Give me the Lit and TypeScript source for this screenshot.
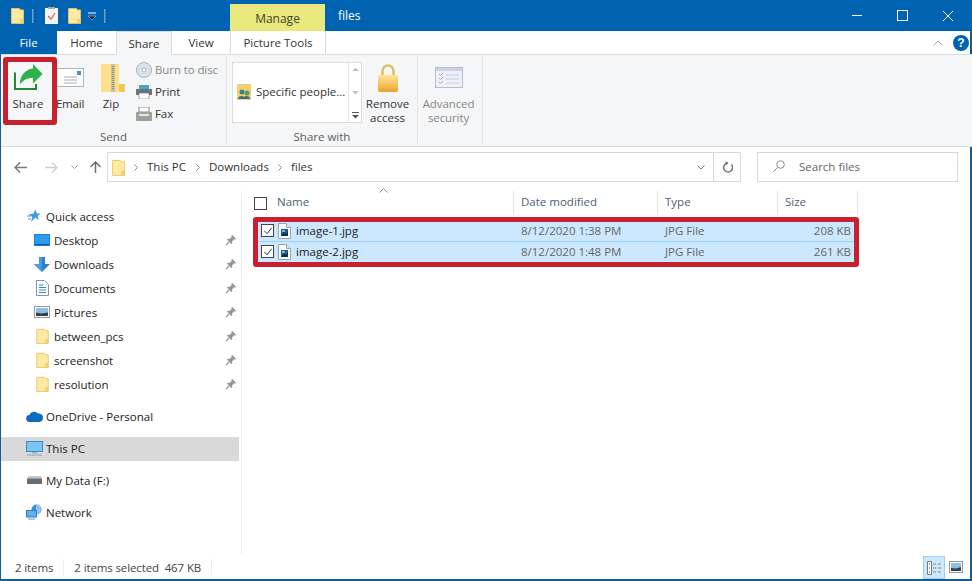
import { LitElement, html, css } from "lit";
import { customElement } from "lit/decorators.js";

const folder = (w = 14, h = 18) => html`<svg width=${w} height=${h} viewBox="0 0 14 18"><path d="M.5 1.500h8.500l1 1.500h3.500v14.500H.5z" fill="#ffe9a3" stroke="#e6c864"/><path d="M10 12.500h3.500v5H10z" fill="#f3cf6c"/></svg>`;
const pin = html`<svg width="12" height="12" viewBox="0 0 12 12"><path d="M7 .8l4.200 4.200-1.200.6-.8-.4L7 7.400l.3 1.800-.9.9L1.900 5.600l.9-.9 1.800.3 2.200-2.200-.4-.8z" fill="#8f949b"/><path d="M4 8L1 11" stroke="#8f949b" stroke-width="1.200"/></svg>`;
const fileIcon = html`<svg class="fi" width="13" height="16" viewBox="0 0 13 16"><path d="M.5.5h8l4 4v11H.5z" fill="#fff" stroke="#9aa3ad"/><path d="M8.500.5v4h4" fill="#e8edf2" stroke="#9aa3ad"/><rect x="3" y="6" width="7" height="7" fill="#1d5e8e"/><path d="M3 13l3-4 2 2 2-3v5z" fill="#0e3350"/><rect x="4" y="7" width="3" height="2" fill="#6fc0e8"/></svg>`;
const check = (on: boolean) => html`<span class="check">${on ? html`<svg width="10" height="10" viewBox="0 0 11 11"><path d="M1.500 5.500l3 3 5-6.500" fill="none" stroke="#333" stroke-width="1.100"/></svg>` : ""}</span>`;
const sepChev = html`<svg width="4" height="7"><path d="M.5.500l3 3-3 3" fill="none" stroke="#8a8a8a"/></svg>`;

const navIcons: Record<string, unknown> = {
  star: html`<svg width="14" height="14" viewBox="0 0 14 14"><path d="M8.500.5l1.300 4h4l-3.200 2.500 1.200 4-3.400-2.400L4 13l1.400-5L1.600 5.300l4.600-.5z" fill="#3a9bdc"/><path d="M0 7h4M1 10h3" stroke="#3a9bdc"/></svg>`,
  desktop: html`<svg width="16" height="12" viewBox="0 0 16 12"><rect width="16" height="12" fill="#1c7ed6"/><rect x="1" y="1" width="14" height="9" fill="#2f9bf0"/><rect x="1" y="10" width="14" height="1" fill="#0f5aa0"/></svg>`,
  down: html`<svg width="16" height="15" viewBox="0 0 16 15"><path d="M5 0h6v7h5l-8 8-8-8h5z" fill="#2f7fd0"/><path d="M5 0h3v15l-8-8h5z" fill="#4a9be6"/></svg>`,
  doc: html`<svg width="13" height="16" viewBox="0 0 13 16"><path d="M.5.5h8l4 4v11H.5z" fill="#fff" stroke="#8a96a3"/><path d="M3 5h4M3 7.500h7M3 10h7M3 12.500h7" stroke="#2d8fc4"/></svg>`,
  pic: html`<svg width="16" height="12" viewBox="0 0 16 12"><rect x=".5" y=".5" width="15" height="11" fill="#fff" stroke="#8f98a3"/><rect x="2" y="2" width="12" height="8" fill="#8fc0e0"/><path d="M2 10V6.500l5 1 7-1V10z" fill="#30404f"/></svg>`,
  cloud: html`<svg width="17" height="11" viewBox="0 0 17 11"><path d="M4 11a3.500 3.500 0 0 1-.6-7A5 5 0 0 1 12 2.500a4 4 0 0 1 1.500 8.500z" fill="#0f6cbd"/></svg>`,
  pc: html`<svg width="17" height="15" viewBox="0 0 17 15"><rect x=".5" y=".5" width="16" height="10" fill="#7cc4f2" stroke="#3a8fc8"/><path d="M6 11h5v1.500H6z" fill="#9bb0c0"/><path d="M1 14h15" stroke="#8fa0ad"/></svg>`,
  drive: html`<svg width="15" height="8" viewBox="0 0 15 8"><path d="M2 0h11l2 3v5H0V3z" fill="#6a6e72"/><path d="M2 0h11l1.500 2.500H.5z" fill="#c5c8cb"/></svg>`,
  net: html`<svg width="16" height="16" viewBox="0 0 16 16"><circle cx="10.500" cy="5.500" r="5" fill="#3f8fd2"/><path d="M10 .5a5 5 0 0 1 0 10z" fill="#8fc6ee"/><rect x=".5" y="6.500" width="10" height="6.500" fill="#5fb0ea" stroke="#2f7fc0"/><path d="M2 15h7" stroke="#7a93a8"/></svg>`,
};

const nav = [
  { k: "star", t: "Quick access", lv: 0 },
  { k: "desktop", t: "Desktop", lv: 1, p: 1 },
  { k: "down", t: "Downloads", lv: 1, p: 1 },
  { k: "doc", t: "Documents", lv: 1, p: 1 },
  { k: "pic", t: "Pictures", lv: 1, p: 1 },
  { k: "folder", t: "between_pcs", lv: 1, p: 1 },
  { k: "folder", t: "screenshot", lv: 1, p: 1 },
  { k: "folder", t: "resolution", lv: 1, p: 1 },
  { k: "cloud", t: "OneDrive - Personal", lv: 0, gap: 1 },
  { k: "pc", t: "This PC", lv: 0, gap: 1, sel: 1 },
  { k: "drive", t: "My Data (F:)", lv: 0, gap: 1 },
  { k: "net", t: "Network", lv: 0, gap: 1 },
];

const rows = [
  ["image-1.jpg", "8/12/2020 1:38 PM", "JPG File", "208 KB"],
  ["image-2.jpg", "8/12/2020 1:48 PM", "JPG File", "261 KB"],
];

@customElement("app-root")
export class AppRoot extends LitElement {
  static styles = css`
    :host { display: block; width: 972px; height: 581px; overflow: hidden; position: relative; background: #fff; font-family: "Open Sans", "Noto Sans", sans-serif; font-size: 11.5px; color: #222; }
    .win { height: 581px; box-sizing: border-box; border: 1px solid #0a5f9e; border-top: 0; border-bottom-width: 2px; border-right-width: 2px; display: flex; flex-direction: column; }
    .title { height: 31px; margin: 0 -2px 0 -1px; background: #0063b1; display: flex; align-items: flex-end; flex: none; color: #fff; }
    .qat { width: 230px; height: 31px; box-sizing: border-box; padding: 7px 0 0 11px; display: flex; align-items: flex-start; }
    .qat .sep { width: 1px; height: 14px; background: #6ea3cf; margin: 2px 11px 0 8px; border-right: 1px solid #2f80bf; }
    .qat svg { flex: none; }
    .qat .gap { width: 10px; }
    .qat .gap2 { width: 7px; }
    .qat .sep2 { margin-left: 8px; }
    .manage { width: 95px; height: 27px; background: #e8e87c; color: #41452a; display: flex; align-items: center; justify-content: center; font-size: 12px; padding-top: 2px; box-sizing: border-box; }
    .tname { margin-left: 13px; align-self: center; font-size: 12px; padding-bottom: 1px; }
    .caps { margin-left: auto; margin-right: 1px; height: 31px; display: flex; }
    .cap { width: 46px; display: flex; align-items: center; justify-content: center; }
    .cap.min { width: 44px; }
    .tabs { height: 23px; flex: none; display: flex; background: #fff; margin-left: -1px; position: relative; }
    .tab { display: flex; align-items: center; justify-content: center; box-sizing: border-box; height: 23px; color: #333; font-size: 11.5px; }
    .tab.file { width: 57px; background: #0063b1; color: #fff; }
    .tab.home { width: 59px; }
    .tab.share { width: 56px; height: 24px; background: #f5f6f7; border: 1px solid #dadbdc; border-bottom: 0; z-index: 1; }
    .tab.view { width: 58px; }
    .tab.pt { width: 96px; border-left: 1px solid #dadbdc; border-right: 1px solid #dadbdc; }
    .tabr { margin-left: auto; display: flex; align-items: center; gap: 10px; padding-right: 1px; }
    .help { width: 16px; height: 16px; border-radius: 50%; background: #0063b1; color: #fff; font: bold 12px "Liberation Sans", sans-serif; display: flex; align-items: center; justify-content: center; }
    .ribbon { height: 93px; flex: none; box-sizing: border-box; background: #f5f6f7; border-top: 1px solid #dadbdc; border-bottom: 1px solid #dadbdc; display: flex; margin-right: -2px; }
    .group { display: flex; flex-direction: column; border-right: 1px solid #e2e3e4; box-sizing: border-box; margin: 1px 0 3px; }
    .gbody { height: 73px; display: flex; flex: none; }
    .glabel { text-align: center; color: #5c5c5c; font-size: 11.5px; line-height: 15px; }
    .g1 { width: 226px; } .g2 { width: 191px; } .g3 { width: 65px; }
    .big { display: flex; flex-direction: column; align-items: center; text-align: center; color: #333; line-height: 14px; flex: none; }
    .big .ic { height: 41px; box-sizing: border-box; display: flex; align-items: flex-start; justify-content: center; flex: none; }
    .b-share { width: 46px; margin-left: 4px; }
    .b-email { width: 36px; margin-left: 1px; letter-spacing: -0.2px; }
    .b-zip { width: 44px; margin-left: 1px; }
    .b-lock { width: 51px; }
    .b-adv { width: 61px; letter-spacing: -0.1px; }
    .pt7 { padding-top: 7px; } .pt8 { padding-top: 8px; } .pt12 { padding-top: 12px; } .pt11 { padding-top: 11px; }
    .zipi { margin-left: 3px; }
    .dim, .big.dim, .small div.dim { color: #868686; }
    .small { display: flex; flex-direction: column; margin-left: 3px; padding-top: 4px; gap: 3px; letter-spacing: -0.1px; }
    .small div { height: 19px; display: flex; align-items: center; gap: 3px; color: #333; white-space: nowrap; }
    .gallery { width: 130px; height: 61px; margin: 6px 0 0 5px; box-sizing: border-box; background: #fff; border: 1px solid #dcdcdc; display: flex; flex: none; }
    .gitem { flex: 1; display: flex; align-items: center; gap: 5px; padding-left: 4px; padding-bottom: 2px; white-space: nowrap; color: #333; }
    .gscroll { width: 13px; border-left: 1px solid #e6e6e6; display: flex; flex-direction: column; align-items: center; justify-content: space-between; padding: 4px 0 3px; box-sizing: border-box; }
    .addr { height: 44px; flex: none; display: flex; align-items: flex-start; padding-top: 5px; box-sizing: border-box; }
    .navb { width: 106px; height: 30px; display: flex; align-items: center; flex: none; padding-left: 13px; box-sizing: border-box; }
    .m18 { margin-left: 18px; } .m13 { margin-left: 13px; } .m12 { margin-left: 12px; }
    .abox { width: 634px; height: 30px; box-sizing: border-box; border: 1px solid #d9d9d9; display: flex; align-items: center; padding-left: 4px; flex: none; color: #333; }
    .crumb { margin-left: 9px; display: flex; align-items: center; gap: 9px; padding-bottom: 2px; }
    .crumb svg { margin-top: 2px; }
    .wide { margin-right: 1px; }
    .aend { margin-left: auto; display: flex; align-items: center; height: 100%; }
    .aend .chev { width: 24px; display: flex; justify-content: center; }
    .aend .ref { width: 26px; height: 100%; border-left: 1px solid #d9d9d9; display: flex; align-items: center; justify-content: center; }
    .search { width: 201px; height: 30px; margin-left: 16px; box-sizing: border-box; border: 1px solid #d9d9d9; display: flex; align-items: center; padding: 0 0 2px 15px; gap: 14px; color: #666; flex: none; }
    .main { flex: 1; display: flex; min-height: 0; position: relative; }
    .nav { width: 241px; box-sizing: border-box; border-right: 1px solid #ececec; padding-top: 14px; flex: none; margin-bottom: 25px; }
    .nrow { height: 24px; display: flex; align-items: center; width: 238px; box-sizing: border-box; white-space: nowrap; padding-bottom: 2px; }
    .nrow.gap { margin-top: 8px; }
    .nrow.sel { background: #d9d9d9; }
    .nicon { width: 18px; display: flex; justify-content: center; margin-right: 3px; flex: none; }
    .lv0 { padding-left: 24px; } .lv1 { padding-left: 32px; }
    .pin { margin-left: auto; margin-right: 2px; display: flex; }
    .list { flex: 1; position: relative; padding: 0 0 0 14px; }
    .grid { display: grid; grid-template-columns: 258px 144px 120px 80px; }
    .head { height: 30px; color: #4c607a; align-items: start; }
    .head > div { height: 24px; display: flex; align-items: center; border-right: 1px solid #e5e5e5; padding: 0 0 4px 7px; box-sizing: border-box; }
    .head > div:first-child { padding-left: 0; gap: 10px; }
    .head .check { margin: 4px 0 0 -2px; }
    .check { width: 11px; height: 11px; border: 1px solid #444; background: #fff; display: flex; flex: none; align-items: center; justify-content: center; box-sizing: content-box; }
    .rows { margin: 0 0 0 2px; width: 600px; }
    .row { height: 21px; box-sizing: border-box; background: #cce8ff; border-bottom: 1px solid #99d1ff; align-items: center; color: #666; grid-template-columns: 256px 144px 120px 80px; }
    .row:last-child { border-bottom-color: transparent; }
    .row > div { padding: 0 0 1px 7px; white-space: nowrap; box-sizing: border-box; }
    .row > .size { text-align: right; padding: 0 7px 1px 0; }
    .row > .nm { display: flex; align-items: center; padding-left: 3px; color: #222; }
    .fi { margin: 0 5px 0 4px; }
    .sort { position: absolute; left: 137px; top: -3px; }
    .red { position: absolute; border: 5px solid #c8202f; border-radius: 3px; box-sizing: border-box; z-index: 5; pointer-events: none; }
    .red.a { left: 3px; top: 57px; width: 54px; height: 68px; }
    .red.b { left: 253px; top: 217px; width: 606px; height: 50px; }
    .status { position: absolute; left: 0; right: 0; bottom: 0; height: 24px; display: flex; align-items: center; color: #444; padding-left: 14px; box-sizing: border-box; letter-spacing: -0.12px; }
    .status .s { width: 1px; height: 16px; background: #eee; margin: 0 10px; }
    .views { margin-left: auto; display: flex; align-items: flex-end; padding-right: 7px; gap: 4px; height: 100%; }
    .vbtn { width: 22px; height: 23px; background: #cce8ff; border: 1px solid #99d1ff; display: flex; align-items: center; justify-content: center; box-sizing: border-box; }
    .vlarge { margin-bottom: 6px; }
  `;

  render() {
    return html`
      <div class="win">
        <div class="title">
          <div class="qat">
            ${folder(13, 17)}<span class="sep"></span>
            <svg width="13" height="17" viewBox="0 0 13 17"><path d="M0 1h13v16H0z" fill="#f4f4f4"/><path d="M3 0h7v2H3z" fill="#a8a8a8"/><path d="M3 9l3 3 4-6" fill="none" stroke="#d8653a" stroke-width="1.200"/></svg>
            <span class="gap"></span>${folder(13, 17)}
            <span class="gap2"></span>
            <svg width="8" height="17" viewBox="0 0 8 17"><path d="M0 6h8" stroke="#fff"/><path d="M0 9h8l-4 4z" fill="#16263a" stroke="#cfe0ee" stroke-width=".5"/></svg>
            <span class="sep sep2"></span>
          </div>
          <div class="manage">Manage</div>
          <div class="tname">files</div>
          <div class="caps">
            <div class="cap min"><svg width="10" height="10"><path d="M0 4.500h10" stroke="#fff"/></svg></div>
            <div class="cap"><svg width="11" height="11"><rect x=".5" y=".5" width="10" height="10" fill="none" stroke="#fff"/></svg></div>
            <div class="cap"><svg width="10" height="10"><path d="M0 0l10 10M10 0L0 10" stroke="#fff"/></svg></div>
          </div>
        </div>
        <div class="tabs">
          <div class="tab file">File</div><div class="tab home">Home</div><div class="tab share">Share</div><div class="tab view">View</div><div class="tab pt">Picture Tools</div>
          <div class="tabr">
            <svg width="10" height="6"><path d="M.5 5.500L5 1l4.500 4.500" fill="none" stroke="#a5a5a5"/></svg>
            <span class="help">?</span>
          </div>
        </div>
        <div class="ribbon">
          <div class="group g1">
            <div class="gbody">
              <div class="big b-share">
                <div class="ic pt7"><svg width="29" height="28" viewBox="0 0 29 28"><path d="M1 9.500V26h21v-5" fill="none" stroke="#1f8a3a" stroke-width="2"/><path d="M19 1l9.500 10-9.500 9.500v-5.500c-5 0-9 1-13 6.500 0-9 5-15 13-16z" fill="#2eb04d"/></svg></div>Share
              </div>
              <div class="big b-email">
                <div class="ic pt12"><svg width="28" height="19" viewBox="0 0 28 19"><rect x=".5" y=".5" width="27" height="18" fill="#fff" stroke="#b0b6bd"/><rect x="21" y="3" width="4" height="4" fill="#4a90c8"/><path d="M8 9h13M8 12h13M8 15h13" stroke="#a5adb6"/></svg></div>Email
              </div>
              <div class="big b-zip">
                <div class="ic pt8"><svg class="zipi" width="24" height="28" viewBox="0 0 24 28"><path d="M0 0h18v20h6v8H0z" fill="#ffe08a"/><path d="M18 20h6v8h-6z" fill="#f2c75c"/><rect x="10" y="0" width="4" height="28" fill="#c9c0a0"/><path d="M12 2v24" stroke="#6a6a5a" stroke-dasharray="1 1"/></svg></div>Zip
              </div>
              <div class="small">
                <div class="dim"><svg width="16" height="16" viewBox="0 0 16 16"><circle cx="8" cy="8" r="7.500" fill="#dbe2ea" stroke="#a9b2bc"/><circle cx="8" cy="8" r="2" fill="#fff" stroke="#a9b2bc"/></svg>Burn to disc</div>
                <div><svg width="16" height="14" viewBox="0 0 16 14"><rect x="3" y="0" width="10" height="4" fill="#49a5c8"/><rect y="4" width="16" height="6" fill="#6d7379"/><rect x="3" y="8" width="10" height="6" fill="#fff" stroke="#555" stroke-width=".5"/></svg>Print</div>
                <div><svg width="16" height="14" viewBox="0 0 16 14"><rect x="3" y="0" width="10" height="5" fill="#fff" stroke="#888"/><rect y="5" width="16" height="9" rx="1" fill="#9aa09a"/><rect x="3" y="7" width="10" height="2" fill="#e0e8e0"/></svg>Fax</div>
              </div>
            </div>
            <div class="glabel">Send</div>
          </div>
          <div class="group g2">
            <div class="gbody">
              <div class="gallery">
                <div class="gitem"><svg width="14" height="16" viewBox="0 0 14 16"><rect width="14" height="16" fill="#f4cf6e"/><circle cx="5" cy="8" r="2.500" fill="#3d7f8f"/><circle cx="10" cy="9" r="2.500" fill="#5a9a6a"/><path d="M1 15c0-4 7-4 7 0zM6 15c0-4 7-4 7 0z" fill="#3a6f8a"/></svg>Specific people...</div>
                <div class="gscroll">
                  <svg width="7" height="5"><path d="M0 4l3.500-3.500L7 4z" fill="#c4c4c4"/></svg>
                  <svg width="7" height="5"><path d="M0 1l3.500 3.500L7 1z" fill="#c4c4c4"/></svg>
                  <svg width="7" height="7"><path d="M0 .5h7" stroke="#555"/><path d="M0 3h7L3.500 6.500z" fill="#555"/></svg>
                </div>
              </div>
              <div class="big b-lock">
                <div class="ic pt8"><svg width="20" height="28" viewBox="0 0 20 28"><defs><linearGradient id="lk" x1="0" y1="0" x2="0" y2="1"><stop offset="0" stop-color="#ffe596"/><stop offset="1" stop-color="#e9a52f"/></linearGradient></defs><path d="M4.500 12V7a5.500 5.500 0 0 1 11 0v5" fill="none" stroke="#dfc06a" stroke-width="2.500"/><rect y="11" width="20" height="17" rx="2" fill="url(#lk)"/></svg></div>Remove<br>access
              </div>
            </div>
            <div class="glabel">Share with</div>
          </div>
          <div class="group g3">
            <div class="gbody">
              <div class="big dim b-adv">
                <div class="ic pt11"><svg width="28" height="21" viewBox="0 0 28 21"><rect x=".5" y=".5" width="27" height="20" fill="#eef2f8" stroke="#b4bfd2"/><rect x="1" y="1" width="26" height="3" fill="#c7d3e6"/><path d="M4 7l1.500 1.500L8 6M4 11l1.500 1.500L8 10M4 15l1.500 1.500L8 14" fill="none" stroke="#9aa8bc"/><path d="M11 8h13M11 12h13M11 16h13" stroke="#c3ccda"/></svg></div>Advanced<br>security
              </div>
            </div>
          </div>
        </div>
        <div class="addr">
          <div class="navb">
            <svg width="13" height="11" viewBox="0 0 13 11"><path d="M6 .5L1 5.500l5 5M1 5.500h12" fill="none" stroke="#7a7a7a" stroke-width="1.500"/></svg>
            <svg class="m18" width="13" height="11" viewBox="0 0 13 11"><path d="M7 .5l5 5-5 5M12 5.500H0" fill="none" stroke="#cfcfcf" stroke-width="1.500"/></svg>
            <svg class="m13" width="7" height="4" viewBox="0 0 7 4"><path d="M.5.500l3 3 3-3" fill="none" stroke="#9a9a9a"/></svg>
            <svg class="m12" width="11" height="12" viewBox="0 0 11 12"><path d="M.5 6l5-5 5 5M5.500 1v11" fill="none" stroke="#6f6f6f" stroke-width="1.500"/></svg>
          </div>
          <div class="abox">
            ${folder(13, 17)}
            <span class="crumb">
              ${sepChev}<span class="wide">This PC</span>
              ${sepChev}<span>Downloads</span>
              ${sepChev}<span>files</span>
            </span>
            <div class="aend">
              <div class="chev"><svg width="8" height="5"><path d="M.5.500l3.500 3.500 3.500-3.500" fill="none" stroke="#777"/></svg></div>
              <div class="ref"><svg width="11" height="12" viewBox="0 0 11 12"><path d="M9.500 3.500a4.500 4.500 0 1 1-4-1.500" fill="none" stroke="#777" stroke-width="1.500"/><path d="M3.500 0l3 2-2.500 2.500z" fill="#777"/></svg></div>
            </div>
          </div>
          <div class="search">
            <svg width="12" height="12" viewBox="0 0 12 12"><circle cx="7.500" cy="4.500" r="3.800" fill="none" stroke="#8a8a8a"/><path d="M4.500 7.500L.5 11.500" stroke="#8a8a8a"/></svg>Search files
          </div>
        </div>
        <div class="main">
          <div class="nav">
            ${nav.map(
              (n) => html`<div class="nrow lv${n.lv} ${n.gap ? "gap" : ""} ${n.sel ? "sel" : ""}">
                <span class="nicon">${n.k === "folder" ? folder(13, 16) : navIcons[n.k]}</span>${n.t}
                ${n.p ? html`<span class="pin">${pin}</span>` : ""}
              </div>`
            )}
          </div>
          <div class="list">
            <svg class="sort" width="9" height="5"><path d="M.5 4.500L4.500.5l4 4" fill="none" stroke="#8a8a8a"/></svg>
            <div class="grid head">
              <div>${check(false)}Name</div><div>Date modified</div><div>Type</div><div>Size</div>
            </div>
            <div class="rows">
              ${rows.map(
                (r) => html`<div class="grid row">
                  <div class="nm">${check(true)}${fileIcon}${r[0]}</div><div>${r[1]}</div><div>${r[2]}</div><div class="size">${r[3]}</div>
                </div>`
              )}
            </div>
          </div>
          <div class="status">
            <span>2 items</span><span class="s"></span><span>2 items selected&nbsp; 467 KB</span><span class="s"></span>
            <div class="views">
              <div class="vbtn"><svg width="15" height="14" viewBox="0 0 15 14"><path d="M.5.5h4v13h-4z" fill="#fff" stroke="#777"/><path d="M2 3h1M2 7h1M2 11h1" stroke="#555"/><path d="M6 3h3M11 3h3M6 7h3M11 7h3M6 11h3M11 11h3" stroke="#8a8a8a"/></svg></div>
              <svg class="vlarge" width="14" height="12" viewBox="0 0 14 12"><rect x=".5" y=".5" width="13" height="11" fill="#fff" stroke="#8f98a3"/><rect x="2" y="2" width="10" height="8" fill="#8fc0e0"/><path d="M2 10V7l5 .5 5-1.500V10z" fill="#30404f"/></svg>
            </div>
          </div>
        </div>
      </div>
      <div class="red a"></div>
      <div class="red b"></div>
    `;
  }
}
